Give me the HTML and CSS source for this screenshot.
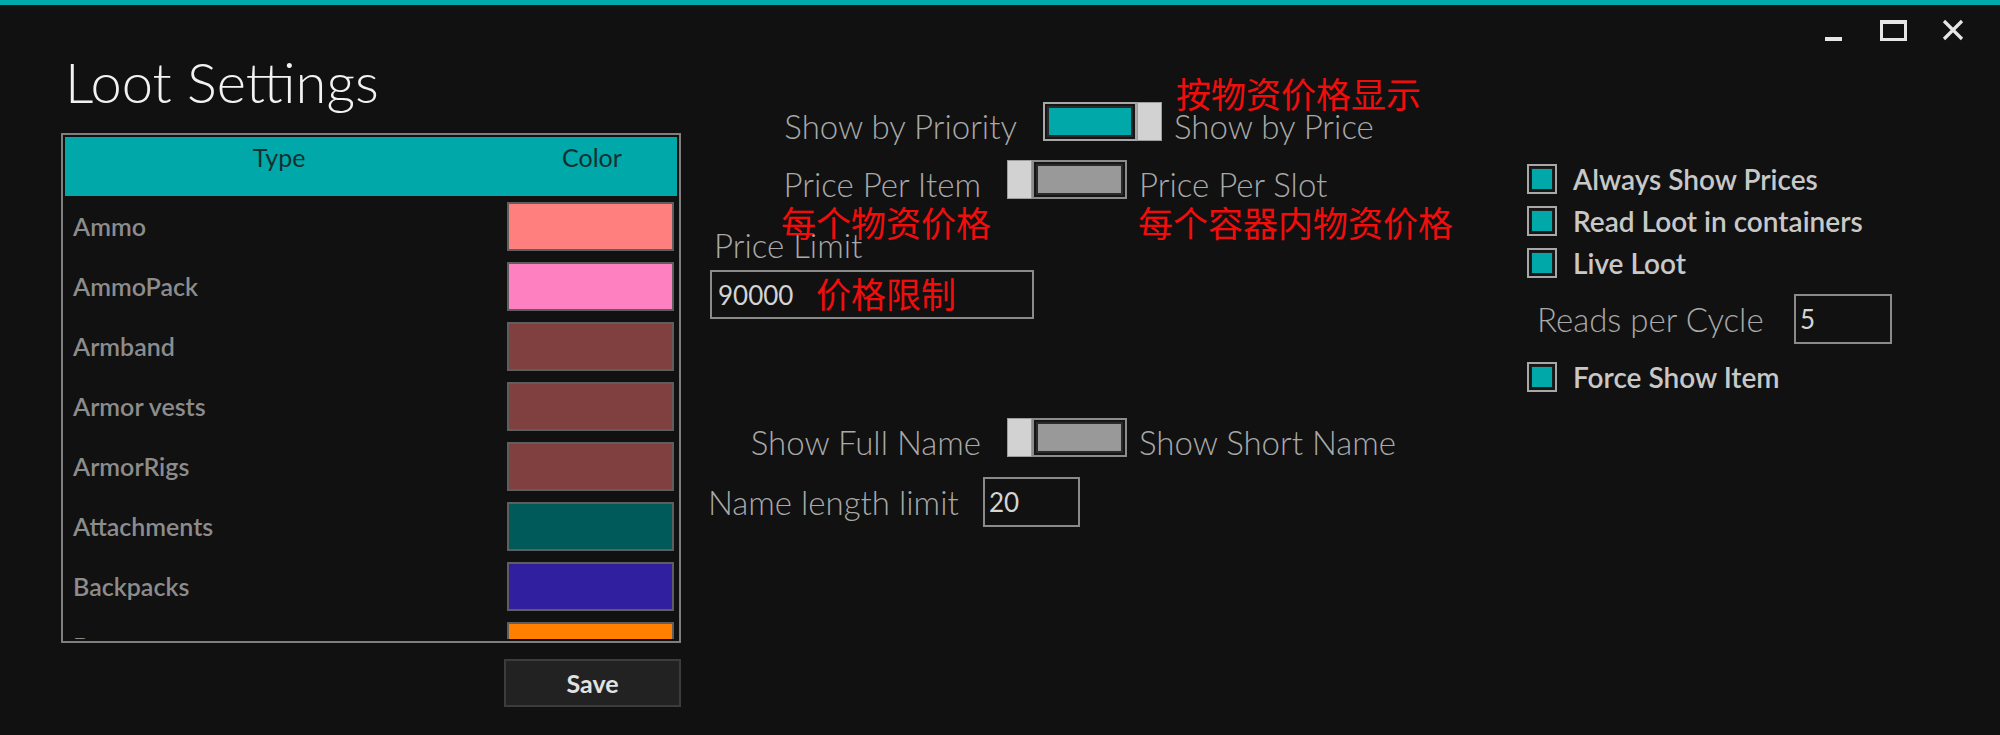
FILE: index.html
```html
<!DOCTYPE html>
<html lang="en">
<head>
<meta charset="utf-8">
<title>Loot Settings</title>
<link rel="stylesheet" href="styles.css">
</head>
<body>
<div class="frame">
  <div class="accent"></div>
  <div class="caption">
    <span class="ctl ctl-min"><svg width="17" height="22" viewBox="0 0 17 22"><rect x="0" y="18" width="17" height="4" fill="#e6e6e6"/></svg></span>
    <span class="ctl ctl-max"><svg width="27" height="22" viewBox="0 0 27 22"><path d="M1.5 2.5 H25.5 V20.5 H1.5 Z" fill="none" stroke="#e6e6e6" stroke-width="3"/><rect x="0" y="1" width="27" height="4" fill="#e6e6e6"/></svg></span>
    <span class="ctl ctl-close"><svg width="22" height="22" viewBox="0 0 22 22"><path d="M2 2 L20 20 M20 2 L2 20" stroke="#e6e6e6" stroke-width="3.2" fill="none"/></svg></span>
  </div>

  <div class="main">
    <section class="left">
      <h1 class="title">Loot Settings</h1>
      <div class="table">
        <div class="thead">
          <div class="th">Type</div>
          <div class="th">Color</div>
        </div>
        <div class="tbody">
          <div class="tr"><div class="td-name">Ammo</div><div class="swatch sw-ammo"></div></div>
          <div class="tr"><div class="td-name">AmmoPack</div><div class="swatch sw-ammopack"></div></div>
          <div class="tr"><div class="td-name">Armband</div><div class="swatch sw-brown"></div></div>
          <div class="tr"><div class="td-name">Armor vests</div><div class="swatch sw-brown"></div></div>
          <div class="tr"><div class="td-name">ArmorRigs</div><div class="swatch sw-brown"></div></div>
          <div class="tr"><div class="td-name">Attachments</div><div class="swatch sw-attach"></div></div>
          <div class="tr"><div class="td-name">Backpacks</div><div class="swatch sw-backpack"></div></div>
          <div class="tr"><div class="td-name">Barter</div><div class="swatch sw-barter"></div></div>
        </div>
      </div>
      <div class="save-row"><button class="save">Save</button></div>
    </section>

    <section class="middle">
      <div class="trow trow-first">
        <span class="lbl lbl-right">Show by Priority</span>
        <span class="toggle">
          <span class="track"><span class="fill fill-on"></span></span>
          <span class="knob"></span>
        </span>
        <span class="lbl">Show by Price</span>
      </div>
      <div class="trow trow-second">
        <span class="lbl lbl-right">Price Per Item</span>
        <span class="toggle">
          <span class="knob"></span>
          <span class="track track-off"><span class="fill fill-off"></span></span>
        </span>
        <span class="lbl">Price Per Slot</span>
      </div>
      <div class="lbl lbl-block">Price Limit</div>
      <div class="input input-wide">90000</div>

      <div class="trow trow-third">
        <span class="lbl lbl-right">Show Full Name</span>
        <span class="toggle">
          <span class="knob"></span>
          <span class="track track-off"><span class="fill fill-off"></span></span>
        </span>
        <span class="lbl">Show Short Name</span>
      </div>
      <div class="frow">
        <span class="lbl lbl-cell">Name length limit</span>
        <div class="input input-small">20</div>
      </div>

      <span class="note note-price">按物资价格显示</span>
      <span class="note note-item">每个物资价格</span>
      <span class="note note-slot">每个容器内物资价格</span>
      <span class="note note-limit">价格限制</span>
    </section>

    <section class="right">
      <div class="check check-first"><span class="box"><span class="box-fill"></span></span><span class="clbl">Always Show Prices</span></div>
      <div class="check"><span class="box"><span class="box-fill"></span></span><span class="clbl">Read Loot in containers</span></div>
      <div class="check"><span class="box"><span class="box-fill"></span></span><span class="clbl">Live Loot</span></div>
      <div class="frow frow-reads">
        <span class="lbl lbl-reads">Reads per Cycle</span>
        <div class="input input-small">5</div>
      </div>
      <div class="check check-force"><span class="box"><span class="box-fill"></span></span><span class="clbl">Force Show Item</span></div>
    </section>
  </div>
</div>
</body>
</html>
```

FILE: styles.css
```css
* { box-sizing: border-box; }

html, body {
  margin: 0;
  padding: 0;
  background: #111111;
}

body {
  font-family: Lato, "Open Sans", "Noto Sans CJK SC", sans-serif;
  color: #a9a9a9;
  width: 2000px;
  height: 735px;
  overflow: hidden;
}

.frame {
  width: 2000px;
  height: 735px;
  background: #111111;
}

.accent {
  height: 5px;
  background: #00a8aa;
}

/* window controls */
.caption {
  height: 43px;
  display: flex;
  justify-content: flex-end;
  align-items: flex-start;
  padding-top: 14px;
  padding-right: 36px;
}
.ctl { display: block; height: 22px; }
.ctl svg { display: block; }
.ctl-min { margin-right: 38px; }
.ctl-max { margin-right: 35px; }

.main {
  display: flex;
  align-items: flex-start;
}

/* left column */
.left {
  margin-left: 61px;
  width: 620px;
}

.title {
  margin: 0;
  font-family: Lato, sans-serif;
  font-weight: 300;
  font-size: 56px;
  line-height: 67px;
  color: #f2f2f2;
  padding-left: 4px;
}

.table {
  margin-top: 18px;
  border: 2px solid #7f7f7f;
  padding: 2px;
  height: 510px;
  overflow: hidden;
}

.thead {
  display: grid;
  grid-template-columns: 1fr 170px;
  column-gap: 14px;
  background: #00a8aa;
  height: 59px;
  padding-top: 4px;
}
.th {
  text-align: center;
  font-size: 25px;
  line-height: 32px;
  color: #133030;
}

.tbody {
  height: 443px;
  overflow: hidden;
}

.tr {
  display: grid;
  grid-template-columns: 1fr 170px;
  column-gap: 14px;
  height: 60px;
  padding-top: 6px;
}

.td-name {
  padding-left: 8px;
  font-size: 25px;
  font-weight: 600;
  line-height: 49px;
  color: #8c8c8c;
}

.swatch {
  width: 167px;
  height: 49px;
  border: 2px solid #5e5e5e;
}
.sw-ammo { background: #ff7f7f; }
.sw-ammopack { background: #ff80c0; }
.sw-brown { background: #804040; }
.sw-attach { background: #005a5a; }
.sw-backpack { background: #3020a0; }
.sw-barter { background: #ff8000; }

.save-row {
  display: flex;
  justify-content: flex-end;
  margin-top: 16px;
}
.save {
  width: 177px;
  height: 48px;
  background: #222222;
  border: 2px solid #3c3c3c;
  color: #e2e2e2;
  font-family: Lato, sans-serif;
  font-weight: 700;
  font-size: 25px;
  padding: 0;
}

/* middle column */
.middle {
  position: relative;
  margin-left: 26px;
  width: 820px;
  height: 600px;
}

.lbl {
  font-family: Lato, sans-serif;
  font-weight: 300;
  font-size: 33px;
  line-height: 39px;
  color: #a9a9a9;
  white-space: nowrap;
}

.trow {
  display: grid;
  grid-template-columns: 274px auto auto;
  column-gap: 26px;
  align-items: start;
  justify-content: start;
  height: 39px;
}
.trow .lbl { margin-top: 5px; }
.trow .toggle + .lbl { margin-left: -14px; }
.lbl-right { text-align: right; }

.trow-first { margin-top: 54px; margin-left: 36px; }
.trow-second { margin-top: 19px; }
.trow-third { margin-top: 99px; }

.toggle {
  display: flex;
  height: 39px;
}
.track {
  width: 94px;
  height: 39px;
  border: 2px solid #a8a8a8;
  padding: 2px;
  background: #161616;
}
.track-off { width: 95px; border-color: #8c8c8c; }
.fill {
  display: block;
  height: 100%;
  border: 2px solid #2a2a2a;
}
.fill-on { background: #00a8aa; }
.fill-off { background: #999999; }
.knob {
  width: 25px;
  height: 39px;
  background: #d2d2d2;
  border: 1px solid #9c9c9c;
}

.lbl-block {
  margin-top: 27px;
  padding-left: 7px;
}

.input {
  border: 2px solid #8a8a8a;
  background: #111111;
  font-family: Lato, sans-serif;
  font-size: 26px;
  color: #d4d4d4;
  display: flex;
  align-items: center;
  padding-left: 6px;
}
.input-wide {
  margin-top: 5px;
  margin-left: 3px;
  width: 324px;
  height: 49px;
}
.input-small {
  width: 97px;
  height: 50px;
  padding-left: 4px;
}

.frow {
  display: flex;
  align-items: center;
  margin-top: 20px;
}
.lbl-cell {
  width: 276px;
  padding-left: 1px;
}

/* red annotations laid over the screenshot */
.note {
  position: absolute;
  font-family: "Noto Sans CJK SC", sans-serif;
  font-size: 35px;
  line-height: 35px;
  color: #f20d0d;
  white-space: nowrap;
}
.note-price { left: 469px; top: 27px; }
.note-item { left: 74px; top: 156px; }
.note-slot { left: 431px; top: 156px; }
.note-limit { left: 109px; top: 227px; }

/* right column */
.right {
  margin-left: 0;
  width: 420px;
}

.check {
  display: flex;
  align-items: center;
  height: 30px;
  margin-top: 12px;
}
.check-first { margin-top: 116px; }
.check-force { margin-top: 18px; }

.box {
  width: 30px;
  height: 30px;
  border: 2px solid #a8a8a8;
  padding: 2px;
  background: #161616;
  margin-right: 16px;
  flex: none;
}
.box-fill {
  display: block;
  width: 100%;
  height: 100%;
  background: #00a8aa;
  border: 1px solid #1f1f1f;
}
.clbl {
  font-family: Lato, sans-serif;
  font-weight: 600;
  font-size: 28px;
  line-height: 30px;
  color: #c8c8c8;
  white-space: nowrap;
}

.frow-reads {
  margin-top: 16px;
  margin-left: 10px;
}
.lbl-reads {
  width: 257px;
}
.frow-reads .input-small {
  width: 98px;
  height: 50px;
}
```
